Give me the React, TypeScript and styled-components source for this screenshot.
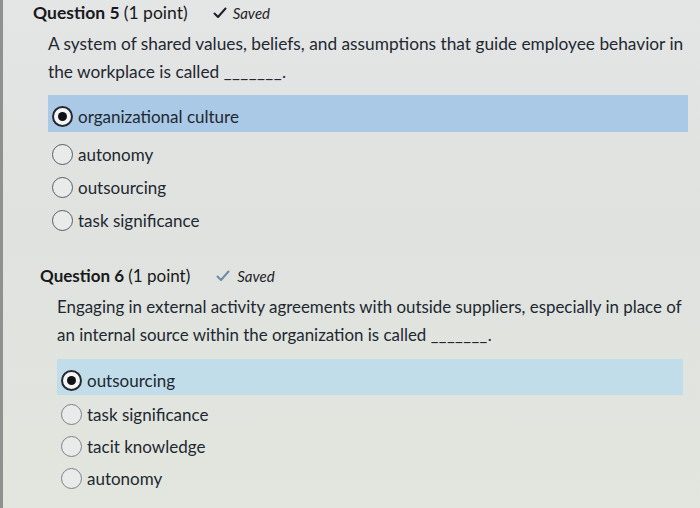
import React from "react";
import styled, { createGlobalStyle } from "styled-components";

const GlobalStyle = createGlobalStyle`
  html, body {
    margin: 0;
    padding: 0;
  }
  body {
    font-family: Lato, "Open Sans", "Liberation Sans", sans-serif;
    color: #222831;
    background: #e0e2e0;
  }
`;

const Page = styled.div`
  width: 700px;
  height: 508px;
  box-sizing: border-box;
  overflow: hidden;
  border-left: 3px solid #8f918f;
  background: linear-gradient(180deg, #e4e5e5 0%, #dfe2df 45%, #e2e6de 100%);
`;

const Question = styled.section<{ $left: number; $top: number; $indent: number; $bandRight: number }>`
  padding: ${(p) => p.$top}px 0 0 ${(p) => p.$left}px;
  --indent: ${(p) => p.$indent}px;
  --band-right: ${(p) => p.$bandRight}px;
`;

const Header = styled.div`
  display: flex;
  align-items: baseline;
  height: 24px;
  line-height: 24px;
`;

const Title = styled.h2<{ $size: number }>`
  margin: 0;
  font-size: ${(p) => p.$size}px;
  font-weight: 700;
  color: #18191c;
  span {
    font-weight: 400;
  }
`;

const SavedTag = styled.span<{ $faded?: boolean }>`
  display: inline-flex;
  align-items: center;
  gap: 6px;
  margin-left: 25px;
  font-size: 15px;
  font-style: italic;
  color: #1f2227;
  svg {
    width: ${(p) => (p.$faded ? 16 : 14)}px;
    height: 12px;
    color: ${(p) => (p.$faded ? "#6f8aa4" : "#1c1f24")};
  }
`;

const Prompt = styled.p<{ $size: number }>`
  margin: 5px 0 0 var(--indent);
  width: 660px;
  font-size: ${(p) => p.$size}px;
  line-height: 28px;
  color: #222831;
`;

const Blank = styled.span`
  letter-spacing: 0.4px;
`;

const Options = styled.div<{ $gap: number }>`
  display: flex;
  flex-direction: column;
  margin: ${(p) => p.$gap}px 0 0 var(--indent);
`;

const Option = styled.label<{ $selected?: boolean; $tint: string; $h: number; $after: number }>`
  display: flex;
  align-items: center;
  gap: 5px;
  height: ${(p) => p.$h}px;
  margin-bottom: ${(p) => p.$after}px;
  width: var(--band-right);
  box-sizing: border-box;
  padding: ${(p) => (p.$selected ? "6px 0 0 4px" : "0 0 0 4px")};
  font-size: 17px;
  color: #222831;
  background: ${(p) => (p.$selected ? p.$tint : "transparent")};
`;

const Radio = styled.span<{ $selected?: boolean; $soft?: boolean }>`
  flex: none;
  width: 21px;
  height: 21px;
  box-sizing: border-box;
  border-radius: 50%;
  border: ${(p) => (p.$selected ? "2px solid #25282e" : `1.5px solid ${p.$soft ? "#7b8088" : "#585c64"}`)};
  background: ${(p) => (p.$selected ? "#f4f5f6" : "#e9ebea")};
  display: flex;
  align-items: center;
  justify-content: center;
  &::after {
    content: "";
    display: ${(p) => (p.$selected ? "block" : "none")};
    width: 9px;
    height: 9px;
    border-radius: 50%;
    background: #101215;
  }
`;

const Check = () => (
  <svg viewBox="0 0 14 12" fill="none" stroke="currentColor" strokeWidth="2" strokeLinecap="round" strokeLinejoin="round">
    <path d="M1.5 6.5 L5 10 L12.5 1.5" />
  </svg>
);

type Q = {
  num: number;
  prompt: string[];
  options: string[];
  selected: number;
  left: number;
  top: number;
  indent: number;
  bandRight: number;
  titleSize: number;
  promptSize: number;
  tint: string;
  faded?: boolean;
  optionsGap: number;
  firstH: number;
  afterFirst: number;
  rowH: number;
};

const questions: Q[] = [
  {
    num: 5,
    prompt: [
      "A system of shared values, beliefs, and assumptions that guide employee behavior in",
      "the workplace is called",
    ],
    options: ["organizational culture", "autonomy", "outsourcing", "task significance"],
    selected: 0,
    left: 30,
    top: 1,
    indent: 15,
    bandRight: 640,
    titleSize: 17.5,
    promptSize: 17.3,
    tint: "#a9c9e6",
    optionsGap: 9,
    firstH: 37,
    afterFirst: 5.5,
    rowH: 33,
  },
  {
    num: 6,
    prompt: [
      "Engaging in external activity agreements with outside suppliers, especially in place of",
      "an internal source within the organization is called",
    ],
    options: ["outsourcing", "task significance", "tacit knowledge", "autonomy"],
    selected: 0,
    left: 37,
    top: 27.5,
    indent: 17,
    bandRight: 626,
    titleSize: 17,
    promptSize: 16.9,
    tint: "#c1dde9",
    faded: true,
    optionsGap: 10,
    firstH: 36,
    afterFirst: 3,
    rowH: 32,
  },
];

export default function App() {
  return (
    <>
      <GlobalStyle />
      <Page>
        {questions.map((q) => (
          <Question key={q.num} $left={q.left} $top={q.top} $indent={q.indent} $bandRight={q.bandRight}>
            <Header>
              <Title $size={q.titleSize}>
                Question {q.num} <span>(1 point)</span>
              </Title>
              <SavedTag $faded={q.faded}>
                <Check />
                Saved
              </SavedTag>
            </Header>
            <Prompt $size={q.promptSize}>
              {q.prompt[0]}
              <br />
              {q.prompt[1]} <Blank>_______</Blank>.
            </Prompt>
            <Options $gap={q.optionsGap}>
              {q.options.map((o, i) => (
                <Option
                  key={o}
                  $selected={i === q.selected}
                  $tint={q.tint}
                  $h={i === 0 ? q.firstH : q.rowH}
                  $after={i === 0 ? q.afterFirst : 0}
                >
                  <Radio $selected={i === q.selected} $soft={q.faded} />
                  {o}
                </Option>
              ))}
            </Options>
          </Question>
        ))}
      </Page>
    </>
  );
}
